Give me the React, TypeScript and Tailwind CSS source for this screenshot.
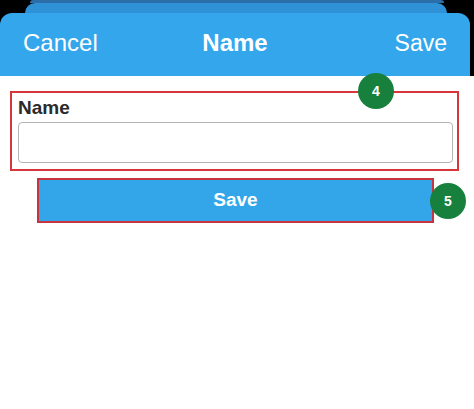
export default function App() {
  const font = { fontFamily: '"Liberation Sans", Arial, sans-serif' };

  return (
    <div className="relative w-[474px] h-[409px] overflow-hidden bg-white" style={font}>
      {/* stacked sheets behind the modal */}
      <div className="bg-black">
        <div className="ml-[30px] mr-[30px] h-[3px] rounded-t-[6px] bg-[#2c6ea8]" />
        <div className="ml-[25px] mr-[27px] h-[10px] rounded-t-[10px] bg-[#2f92d6]" />
        <div className="mr-[4px] grid h-[63px] grid-cols-3 items-center rounded-t-[12px] bg-[#34a7ec] pb-[3px] pl-[23px] pr-[23px] text-white">
          <span className="justify-self-start text-[24px] leading-none">Cancel</span>
          <span className="justify-self-center text-[24px] font-bold leading-none">Name</span>
          <span className="justify-self-end text-[23px] leading-none">Save</span>
        </div>
      </div>

      {/* form */}
      <div className="pt-[15px]">
        <div className="ml-[10px] flex h-[80px] w-[449px] flex-col border-2 border-[#d7363d] pl-[6px] pr-[4px]">
          <label className="mt-[4px] h-[25px] text-[19px] font-semibold leading-[22px] text-[#2b2b2b]">Name</label>
          <input
            type="text"
            className="h-[41px] w-[435px] rounded-[4px] border border-[#b5b5b5] bg-white outline-none"
          />
        </div>

        <button className="ml-[37px] mt-[7px] flex h-[45px] w-[397px] items-center justify-center border-2 border-[#c8343d] bg-[#33a6ea] text-[19px] font-bold text-white">
          Save
        </button>
      </div>

      {/* step badges */}
      <div className="absolute left-[358px] top-[73px] flex h-[36px] w-[36px] items-center justify-center rounded-full bg-[#17803c] text-[14px] font-bold text-white">
        4
      </div>
      <div className="absolute left-[430px] top-[183px] flex h-[36px] w-[36px] items-center justify-center rounded-full bg-[#17803c] text-[14px] font-bold text-white">
        5
      </div>
    </div>
  );
}
